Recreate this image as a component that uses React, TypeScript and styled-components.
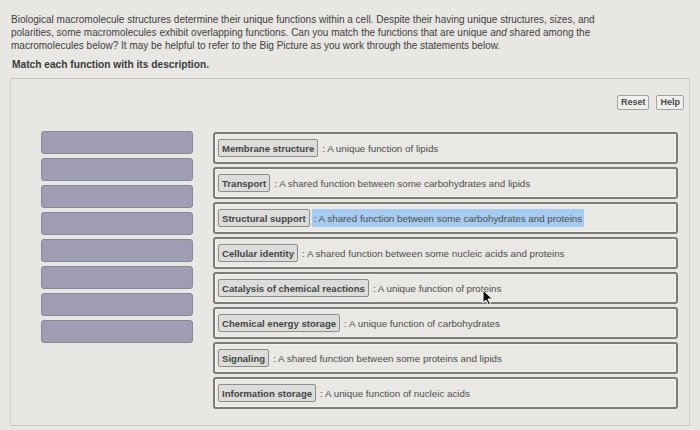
import React, { ReactElement } from 'react';
import styled, { createGlobalStyle } from 'styled-components';

const GlobalStyle = createGlobalStyle`
  html, body {
    margin: 0;
    padding: 0;
    background: #e8e7e3;
  }
  body {
    font-family: 'Liberation Sans', Arial, sans-serif;
  }
`;

const Page = styled.div`
  position: relative;
  width: 700px;
  height: 430px;
  overflow: hidden;
  background: #e8e7e3;
`;

const Intro = styled.div`
  padding: 13px 0 0 11px;
`;

const IntroText = styled.p`
  margin: 0;
  font-size: 10px;
  line-height: 13px;
  color: #3e3e3e;
  white-space: nowrap;
`;

const Instruction = styled.p`
  margin: 6px 0 0 1px;
  font-size: 10.2px;
  line-height: 13px;
  font-weight: bold;
  color: #3a3a3a;
  white-space: nowrap;
`;

const Panel = styled.div`
  margin: 7px 10px 0 10px;
  height: 348px;
  border-top: 1px solid #c4c3bf;
  border-left: 1px solid #d2d1cd;
  border-right: 1px solid #d2d1cd;
  border-bottom: 1px solid #c4c3bf;
  box-sizing: border-box;
`;

const Toolbar = styled.div`
  display: flex;
  justify-content: flex-end;
  gap: 7px;
  padding: 16px 5px 0 0;
`;

const ToolButton = styled.button`
  height: 15px;
  padding: 0 3px;
  font-family: 'Liberation Sans', Arial, sans-serif;
  font-size: 9px;
  font-weight: bold;
  color: #4a4a4a;
  background: #efefed;
  border: 1px solid #a3a3a1;
  border-radius: 2px;
  line-height: 13px;
`;

const Board = styled.div`
  display: flex;
  align-items: flex-start;
  padding: 21px 0 0 30px;
  gap: 20px;
`;

const Targets = styled.div`
  display: flex;
  flex-direction: column;
  gap: 4px;
  width: 152px;
`;

const Target = styled.div`
  height: 23px;
  box-sizing: border-box;
  background: #9f9db2;
  border: 1px solid #87869b;
  border-radius: 3px;
`;

const Rows = styled.div`
  display: flex;
  flex-direction: column;
  gap: 3px;
  width: 465px;
  margin-top: 1px;
`;

const Row = styled.div`
  height: 32px;
  box-sizing: border-box;
  display: flex;
  align-items: center;
  padding: 0 3px;
  border: 2px solid #7c7c7a;
  border-radius: 3px;
  background: #e9e8e4;
  box-shadow: inset 0 0 0 1px #f4f3f0;
`;

const Chip = styled.span`
  height: 18px;
  box-sizing: border-box;
  padding: 0 3px;
  display: inline-flex;
  align-items: center;
  font-size: 9.6px;
  font-weight: bold;
  color: #454545;
  background: #dcdcda;
  border: 1px solid #8d8d8b;
  border-radius: 2px;
  white-space: nowrap;
`;

const Description = styled.span<{ $selected?: boolean }>`
  margin-left: ${(p) => (p.$selected ? '2px' : '4px')};
  padding: 0 ${(p) => (p.$selected ? '2px' : '0')};
  height: 18px;
  display: inline-flex;
  align-items: center;
  font-size: 9.8px;
  color: #4e4e4e;
  background: ${(p) => (p.$selected ? '#a6cbf0' : 'transparent')};
  white-space: nowrap;
`;

const Cursor = styled.svg`
  position: absolute;
  left: 482px;
  top: 289px;
`;

type Pair = {
  label: string;
  description: string;
  selected?: boolean;
};

const pairs: Pair[] = [
  { label: 'Membrane structure', description: 'A unique function of lipids' },
  { label: 'Transport', description: 'A shared function between some carbohydrates and lipids' },
  {
    label: 'Structural support',
    description: 'A shared function between some carbohydrates and proteins',
    selected: true,
  },
  { label: 'Cellular identity', description: 'A shared function between some nucleic acids and proteins' },
  { label: 'Catalysis of chemical reactions', description: 'A unique function of proteins' },
  { label: 'Chemical energy storage', description: 'A unique function of carbohydrates' },
  { label: 'Signaling', description: 'A shared function between some proteins and lipids' },
  { label: 'Information storage', description: 'A unique function of nucleic acids' },
];

function App(): ReactElement {
  return (
    <Page>
      <GlobalStyle />
      <Intro>
        <IntroText>
          Biological macromolecule structures determine their unique functions within a cell. Despite their having
          unique structures, sizes, and
          <br />
          polarities, some macromolecules exhibit overlapping functions. Can you match the functions that are unique{' '}
          <em>and</em> shared among the
          <br />
          macromolecules below? It may be helpful to refer to the Big Picture as you work through the statements below.
        </IntroText>
        <Instruction>Match each function with its description.</Instruction>
      </Intro>
      <Panel>
        <Toolbar>
          <ToolButton type="button">Reset</ToolButton>
          <ToolButton type="button">Help</ToolButton>
        </Toolbar>
        <Board>
          <Targets>
            {pairs.map((p) => (
              <Target key={p.label} />
            ))}
          </Targets>
          <Rows>
            {pairs.map((p) => (
              <Row key={p.label}>
                <Chip>{p.label}</Chip>
                <Description $selected={p.selected}>: {p.description}</Description>
              </Row>
            ))}
          </Rows>
        </Board>
      </Panel>
      <Cursor width="12" height="17" viewBox="0 0 12 17">
        <path d="M1 1 L1 14 L4 11 L6.5 16 L8.5 15 L6 10 L10.5 10 Z" fill="#111" stroke="#fff" strokeWidth="1" />
      </Cursor>
    </Page>
  );
}

export default App;
